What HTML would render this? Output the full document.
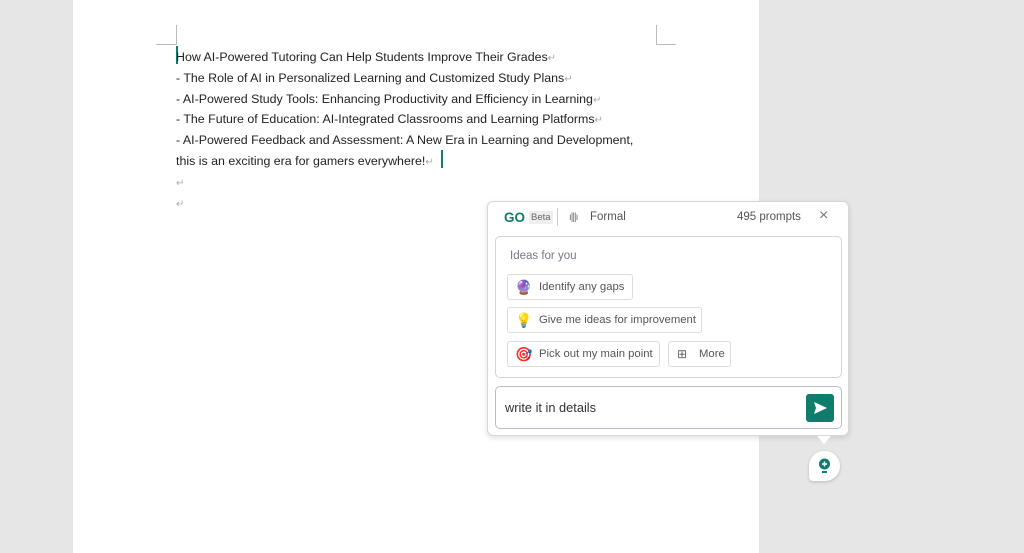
<!DOCTYPE html>
<html><head><style>
*{margin:0;padding:0;box-sizing:border-box}
body{width:1024px;height:553px;background:#e6e6e6;position:relative;overflow:hidden;font-family:"Liberation Sans",sans-serif}
.page{position:absolute;left:73px;top:0;width:686px;height:553px;background:#fff}
.doc{position:absolute;left:176px;top:47px;font-size:12.4px;color:#222;line-height:20.8px;white-space:nowrap}
.ret{color:#aaa;font-size:10px;line-height:0}
.m{position:absolute;background:#bbb}
.pop{position:absolute;left:487px;top:201px;width:362px;height:235px;background:#fff;border:1px solid #d6d6dc;border-radius:6px;box-shadow:0 2px 6px rgba(0,0,0,.12);color:#555;font-size:11.5px}
.ideas{position:absolute;left:7px;top:34px;width:347px;height:142px;border:1px solid #d3d3dd;border-radius:5px}
.chip{position:absolute;height:26px;border:1px solid #ddd;border-radius:3px;font-size:11.3px;color:#555;display:flex;align-items:center;padding-left:31px}
.chip i{position:absolute;left:7px;top:4px;font-style:normal;font-size:14px}
.inp{position:absolute;left:7px;top:184px;width:347px;height:43px;border:1px solid #b9bcd0;border-radius:5px;font-size:12.8px;color:#333;padding:13px 0 0 9px}
.send{position:absolute;right:7px;top:7px;width:28px;height:28px;background:#0e7d6c;border-radius:3px}
</style></head><body>
<div class="page"></div>
<div class="m" style="left:176px;top:25px;width:1px;height:20px"></div>
<div class="m" style="left:156px;top:44px;width:20px;height:1px"></div>
<div class="m" style="left:656px;top:25px;width:1px;height:20px"></div>
<div class="m" style="left:656px;top:44px;width:20px;height:1px"></div>
<div style="position:absolute;left:176px;top:46px;width:2px;height:18px;background:#0e7d6c"></div>
<div style="position:absolute;left:441px;top:150px;width:2px;height:18px;background:#0e7d6c"></div>
<div class="doc">How AI-Powered Tutoring Can Help Students Improve Their Grades<span class="ret">↵</span><br>
- The Role of AI in Personalized Learning and Customized Study Plans<span class="ret">↵</span><br>
- AI-Powered Study Tools: Enhancing Productivity and Efficiency in Learning<span class="ret">↵</span><br>
- The Future of Education: AI-Integrated Classrooms and Learning Platforms<span class="ret">↵</span><br>
- AI-Powered Feedback and Assessment: A New Era in Learning and Development,<br>
this is an exciting era for gamers everywhere!<span class="ret">↵</span><br>
<span class="ret">↵</span><br><span class="ret">↵</span></div>
<div class="pop">
 <div style="position:absolute;left:16px;top:8px;font-weight:bold;font-size:13.5px;color:#0e7d6c">GO</div>
 <div style="position:absolute;left:41px;top:9px;background:#eee;font-size:9.5px;color:#666;padding:1px 2px">Beta</div>
 <div style="position:absolute;left:69px;top:6px;width:1px;height:18px;background:#ccc"></div>
 <div style="position:absolute;left:81px;top:10px;font-size:10px;color:#777;letter-spacing:-1px">ı|||ı</div>
 <div style="position:absolute;left:102px;top:9px">Formal</div>
 <div style="position:absolute;left:249px;top:9px">495 prompts</div>
 <div style="position:absolute;left:331px;top:5px;font-size:16px;color:#777">×</div>
 <div class="ideas">
  <div style="position:absolute;left:14px;top:13px;color:#778">Ideas for you</div>
  <div class="chip" style="left:11px;top:37px;width:126px"><i>🔮</i>Identify any gaps</div>
  <div class="chip" style="left:11px;top:70px;width:195px"><i>💡</i>Give me ideas for improvement</div>
  <div class="chip" style="left:11px;top:104px;width:153px"><i>🎯</i>Pick out my main point</div>
  <div class="chip" style="left:172px;top:104px;width:63px;padding-left:30px"><i style="font-size:12px;color:#666;left:8px;top:5px">⊞</i>More</div>
 </div>
 <div class="inp">write it in details<div class="send"><svg width="28" height="28"><path d="M8 8 L21 14 L8 20 L10 14 Z" fill="#fff"/></svg></div></div>
</div>
<div style="position:absolute;left:817px;top:436px;width:0;height:0;border-left:7px solid transparent;border-right:7px solid transparent;border-top:8px solid #fff"></div>
<div style="position:absolute;left:809px;top:451px;width:31px;height:30px;background:#fff;border-radius:15px 15px 15px 4px;box-shadow:0 1px 3px rgba(0,0,0,.2)">
 <svg width="31" height="30"><circle cx="15.5" cy="13" r="5.5" fill="#0e7d6c"/><path d="M13 13h5M15.5 10.5v5" stroke="#fff" stroke-width="1.5"/><rect x="13" y="20" width="5" height="2" fill="#0e7d6c"/></svg>
</div>
</body></html>
